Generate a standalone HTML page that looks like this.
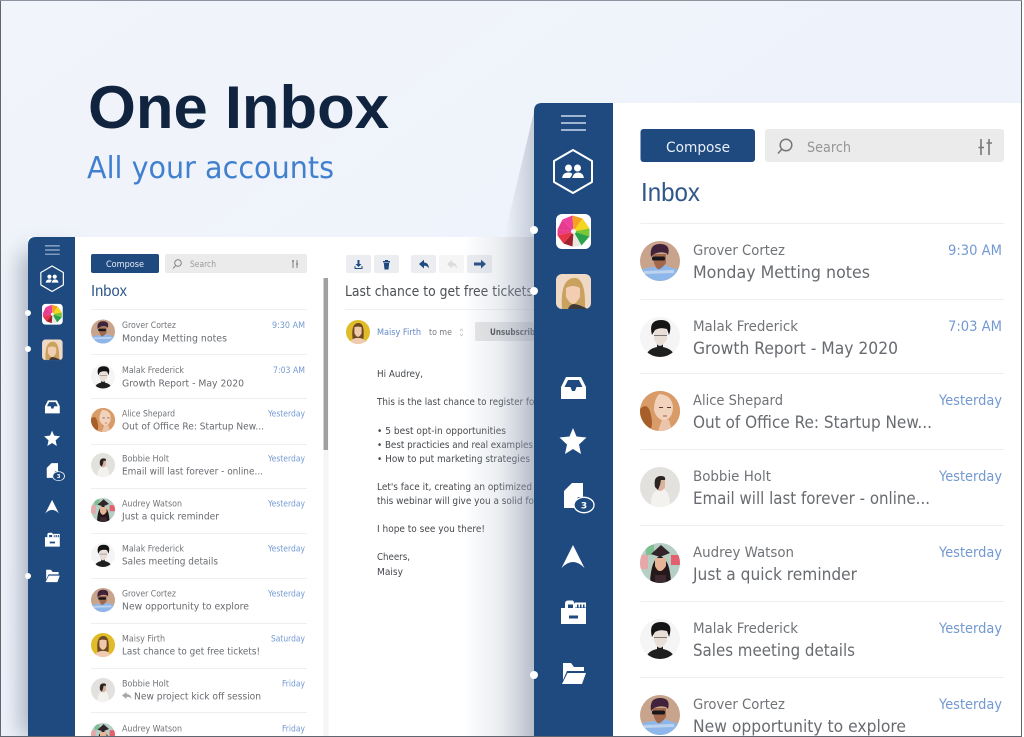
<!DOCTYPE html>
<html lang="en">
<head>
<meta charset="utf-8">
<title>One Inbox</title>
<style>
html,body{margin:0;padding:0;width:1024px;height:737px;overflow:hidden;background:#f0f4fb}
svg{display:block;filter:blur(.35px)}
text{font-family:"DejaVu Sans","Liberation Sans",sans-serif}
.n{fill:#707377}
.s{fill:#686b70}
.t{fill:#7399d2;text-anchor:end}
.b{fill:#45484d;font-size:9.6px}
.h{font-family:"Liberation Sans",sans-serif}
</style>
</head>
<body>
<svg xmlns="http://www.w3.org/2000/svg" width="1024" height="737" viewBox="0 0 1024 737">
<defs>
<linearGradient id="bg" x1="0" y1="0" x2="1" y2="1">
<stop offset="0" stop-color="#f1f4fa"/><stop offset=".5" stop-color="#eef3fb"/><stop offset="1" stop-color="#e9eff9"/>
</linearGradient>
<linearGradient id="sh" x1="0" x2="1" y1="0" y2="0">
<stop offset="0" stop-color="#9aa5b8" stop-opacity="0"/><stop offset=".5" stop-color="#9aa5b8" stop-opacity=".2"/><stop offset="1" stop-color="#8591a6" stop-opacity=".6"/>
</linearGradient>
<linearGradient id="shb" gradientUnits="userSpaceOnUse" x1="504" x2="534" y1="0" y2="0">
<stop offset="0" stop-color="#8591a6" stop-opacity="0"/><stop offset="1" stop-color="#8591a6" stop-opacity=".4"/>
</linearGradient>
<filter id="soft" filterUnits="userSpaceOnUse" x="0" y="180" width="140" height="557"><feGaussianBlur stdDeviation="12"/></filter>
<clipPath id="cc"><circle cx="0" cy="0" r="20"/></clipPath>
<clipPath id="t2"><rect x="22" y="274" width="35" height="35" rx="6"/></clipPath>
<clipPath id="pane"><rect x="329" y="237" width="205" height="500"/></clipPath>

<symbol id="grover" viewBox="-20 -20 40 40"><g clip-path="url(#cc)">
<rect x="-20" y="-20" width="40" height="40" fill="#c9a48d"/>
<path d="M-20 20V9Q-12 6 -4 6L4 4Q12 7 20 9V20Z" fill="#8db6ea"/><path d="M-16 10L14 9V12L-16 13Z" fill="#bdd3ee"/>
<path d="M-7 -7L6 -7V2Q3 6 0 8T-6 2Z" fill="#a2694c"/>
<path d="M-9 -4Q-11 -17 0 -17T8 -6L6 -8Q0 -10 -6 -7Z" fill="#40233a"/>
<rect x="-8" y="-4.500" width="13" height="4" rx="1.500" fill="#17171d"/>
</g></symbol>

<symbol id="malak" viewBox="-20 -20 40 40"><g clip-path="url(#cc)">
<rect x="-20" y="-20" width="40" height="40" fill="#f5f5f5"/>
<path d="M-14 20Q-13 12 -3 10V6H3V10Q13 12 15 20Z" fill="#1f1f1f"/>
<path d="M-6 -8H7V2Q3 9 0 9T-6 2Z" fill="#e9dfd8"/>
<path d="M-8 -2Q-12 -17 1 -17T9 -2L7 -8Q0 -10 -5 -7Z" fill="#141414"/>
<path d="M-6 -1.500H7" stroke="#555" stroke-width=".7"/>
</g></symbol>

<symbol id="alice" viewBox="-20 -20 40 40"><g clip-path="url(#cc)">
<rect x="-20" y="-20" width="40" height="40" fill="#cf8c56"/>
<path d="M-20 20V-8Q-12 -20 4 -20H20V20Z" fill="#d99c68"/>
<path d="M-20 -2Q-12 -10 -9 4T-12 20H-20Z" fill="#a85e28"/>
<path d="M-1 -17Q12 -16 13 -4Q13 6 5 10Q-4 8 -6 -1Q-6 -11 -1 -17Z" fill="#f1d2bd"/>
<path d="M-2 20L2 9L9 9L12 20Z" fill="#ecc4aa"/>
<path d="M-1 -3.500H3M7 -3.500H11" stroke="#5a3a30" stroke-width="1"/>
<path d="M3 5H7" stroke="#c16b62" stroke-width="1.200"/>
</g></symbol>

<symbol id="bobbie" viewBox="-20 -20 40 40"><g clip-path="url(#cc)">
<rect x="-20" y="-20" width="40" height="40" fill="#e3e1de"/>
<path d="M-9 20Q-10 4 0 2T10 20Z" fill="#f4f2ef"/>
<path d="M-3 -8H5V0Q3 4 0 4T-3 0Z" fill="#d8b49d"/>
<path d="M-5 0Q-7 -11 1 -11Q6 -11 5 -7H1L0 -2L-2 3Z" fill="#2b2422"/>
</g></symbol>

<symbol id="audrey" viewBox="-20 -20 40 40"><g clip-path="url(#cc)">
<rect x="-20" y="-20" width="40" height="40" fill="#b6cfc5"/>
<rect x="-20" y="-8" width="8" height="14" fill="#e7a6a8"/><rect x="11" y="-8" width="9" height="10" fill="#e45f6d"/><rect x="-14" y="-18" width="8" height="10" fill="#7fbf92"/>
<path d="M-10 20Q-9 -4 0 -7Q10 -4 11 20Z" fill="#25181a"/>
<path d="M-5 -5H6V3Q3 8 0 8T-5 3Z" fill="#e6b597"/>
<path d="M-9 -9L1 -18L10 -10L0 -6Z" fill="#33232b"/>
<path d="M-5 12H6V20H-5Z" fill="#3d2a30"/>
</g></symbol>

<symbol id="maisy" viewBox="-20 -20 40 40"><g clip-path="url(#cc)">
<rect x="-20" y="-20" width="40" height="40" fill="#e0bc2a"/>
<path d="M-9 12Q-12 -14 0 -15T9 12Z" fill="#6e4a22"/>
<path d="M-6 -8Q0 -10 6 -8V2Q3 8 0 8T-6 2Z" fill="#f0c9ab"/>
<path d="M-14 20Q-12 11 -3 10H3Q12 11 14 20Z" fill="#f0cbb2"/>
</g></symbol>

<symbol id="side" viewBox="0 0 80 737" overflow="visible">
<g fill="#ffffff">
<path d="M27 116H52M27 123H52M27 130H52" stroke="#9fb5d2" stroke-width="2" fill="none"/>
<path d="M39 150L58 161V182L39 193L20 182V161Z" fill="none" stroke="#fff" stroke-width="2" stroke-linejoin="round"/>
<circle cx="34.500" cy="168" r="3.500"/><circle cx="43.500" cy="168" r="3.500"/>
<path d="M28 178Q29 172.500 34 172.500T38 175L36 178ZM38 178L40 174Q42 172.500 44 172.500Q49 172.500 50 178Z"/>
<path fill-rule="evenodd" d="M32 377H47L52 387V399H27V387ZM34 380L30.500 387H36.500L38 391H41L42.500 387H48.500L45 380Z"/>
<path d="M39 428L42.500 436.500L52.500 437.500L45 444.500L47 454L39 449L31 454L33 444.500L25.500 437.500L35.500 436.500Z"/>
<path d="M38 483H49V497H44L41 503V508H30V491Z"/>
<ellipse cx="50" cy="505" rx="10" ry="7.700" fill="#1e4a80" stroke="#fff" stroke-width="1.300"/>
<path d="M39 545L50.500 568Q39 556 27.500 568Z"/>
<path fill-rule="evenodd" d="M27 608H52V624H27ZM35 615.500V618.500H44V615.500Z"/>
<path d="M31 608V604Q31 600.500 34 600.500H39L41 604V608H39V604.500H34V608Z"/>
<path d="M41 602.500H52V607.500H50.500V604.500H49V607.500H47.500V604.500H46V607.500H44.500V604.500H43V607.500H41Z"/>
<path d="M29 663H37L40 667H50V671H33L29 680ZM33.500 673H52L48 684H28Z"/>
</g>
<text x="50" y="508.500" font-size="9" font-weight="700" fill="#fff" text-anchor="middle">3</text>
<rect x="22" y="214" width="35" height="35" rx="6" fill="#fff"/>
<g transform="translate(39.500 231.500)">
<circle r="15.500" fill="#f2f2f2"/>
<path d="M0 0L-16 -2L-11 -12Z" fill="#e63c8f"/>
<path d="M0 0L-11 -12L-1 -16Z" fill="#ef3f9c"/>
<path d="M0 0L-1 -16L9 -13Z" fill="#f5a21e"/>
<path d="M0 0L9 -13L16 -3Z" fill="#f4d61f"/>
<path d="M0 0L16 -3L16 5Z" fill="#7bc634"/>
<path d="M0 0L16 5L8 14Z" fill="#29a24b"/>
<path d="M0 0L8 14L-1 15Z" fill="#e8e8e0"/>
<path d="M0 0L-1 15L-10 12Z" fill="#a0222d"/>
<path d="M0 0L-10 12L-16 4Z" fill="#e8344a"/>
<path d="M0 0L-16 4L-16 -2Z" fill="#ec3b86"/>
<circle r="2.500" fill="#f6f4ea"/>
</g>
<g clip-path="url(#t2)">
<rect x="22" y="274" width="35" height="35" fill="#f0d9c4"/>
<path d="M28 309Q26 280 39 278T51 309Z" fill="#c9a25f"/>
<path d="M32 288Q39 284 46 288V297Q42 304 39 304T32 297Z" fill="#f3cdb2"/>
<path d="M34 309Q36 304 40 304T54 309Z" fill="#3f3a3a"/>
</g>
</symbol>
</defs>

<rect width="1024" height="737" fill="url(#bg)"/>
<rect x="22" y="252" width="50" height="485" fill="#8f99ab" opacity=".8" filter="url(#soft)"/>

<text class="h" x="88" y="128" font-size="60" font-weight="700" fill="#10233f" textLength="301" lengthAdjust="spacingAndGlyphs">One Inbox</text>
<text x="87" y="178" font-size="30" fill="#4080cf" textLength="247" lengthAdjust="spacingAndGlyphs">All your accounts</text>

<!-- LEFT WINDOW -->
<rect x="28" y="237" width="506" height="500" fill="#fff"/>
<path d="M75 237H36Q28 237 28 245V737H75Z" fill="#1e4a80"/>
<g fill="#fff">
<circle cx="28" cy="313" r="3"/><circle cx="28" cy="349" r="3"/><circle cx="28" cy="576" r="3"/>
</g>
<use href="#side" x="29" y="177.200" width="47.360" height="436.300"/>

<rect x="91" y="254" width="68" height="19" rx="2" fill="#1e4a80"/>
<text x="125" y="267" font-size="8.500" fill="#e8eef6" text-anchor="middle" textLength="38" lengthAdjust="spacingAndGlyphs">Compose</text>
<rect x="165" y="254" width="142" height="19" rx="2" fill="#ebebeb"/>
<circle cx="178" cy="263" r="3.300" fill="none" stroke="#777" stroke-width=".9"/><path d="M175.500 265.800L173 268.500" stroke="#777" stroke-width=".9"/>
<text x="190" y="267" font-size="8.500" fill="#9b9b9b" textLength="26" lengthAdjust="spacingAndGlyphs">Search</text>
<path d="M293 260V268M292 261H294M297 260V268M296 264H298" stroke="#777" stroke-width=".9" fill="none"/>
<text class="h" x="91" y="296" font-size="15.500" fill="#2f5789" textLength="36" lengthAdjust="spacingAndGlyphs">Inbox</text>

<g stroke="#eeeeee" stroke-width="1">
<path d="M91 309.500H307M91 354.500H307M91 398.500H307M91 444.500H307M91 488.500H307M91 533.500H307M91 578.500H307M91 623.500H307M91 668.500H307M91 712.500H307"/>
</g>
<use href="#grover" x="91" y="319.500" width="24" height="24"/>
<use href="#malak" x="91" y="364.500" width="24" height="24"/>
<use href="#alice" x="91" y="408" width="24" height="24"/>
<use href="#bobbie" x="91" y="453" width="24" height="24"/>
<use href="#audrey" x="91" y="498" width="24" height="24"/>
<use href="#malak" x="91" y="543" width="24" height="24"/>
<use href="#grover" x="91" y="588" width="24" height="24"/>
<use href="#maisy" x="91" y="633" width="24" height="24"/>
<use href="#bobbie" x="91" y="678" width="24" height="24"/>
<svg x="91" y="723" width="24" height="14" viewBox="0 0 24 14"><use href="#audrey" x="0" y="0" width="24" height="24"/></svg>

<g font-size="8.600">
<text class="n" x="122" y="328" textLength="54" lengthAdjust="spacingAndGlyphs">Grover Cortez</text>
<text class="n" x="122" y="373" textLength="62" lengthAdjust="spacingAndGlyphs">Malak Frederick</text>
<text class="n" x="122" y="416.500" textLength="53" lengthAdjust="spacingAndGlyphs">Alice Shepard</text>
<text class="n" x="122" y="461.500" textLength="47" lengthAdjust="spacingAndGlyphs">Bobbie Holt</text>
<text class="n" x="122" y="506.500" textLength="60" lengthAdjust="spacingAndGlyphs">Audrey Watson</text>
<text class="n" x="122" y="551.500" textLength="62" lengthAdjust="spacingAndGlyphs">Malak Frederick</text>
<text class="n" x="122" y="596.500" textLength="54" lengthAdjust="spacingAndGlyphs">Grover Cortez</text>
<text class="n" x="122" y="641.500" textLength="43" lengthAdjust="spacingAndGlyphs">Maisy Firth</text>
<text class="n" x="122" y="686.500" textLength="47" lengthAdjust="spacingAndGlyphs">Bobbie Holt</text>
<text class="n" x="122" y="731.500" textLength="60" lengthAdjust="spacingAndGlyphs">Audrey Watson</text>
<text class="t" x="305" y="328" textLength="33" lengthAdjust="spacingAndGlyphs">9:30 AM</text>
<text class="t" x="305" y="373" textLength="32" lengthAdjust="spacingAndGlyphs">7:03 AM</text>
<text class="t" x="305" y="416.500" textLength="37" lengthAdjust="spacingAndGlyphs">Yesterday</text>
<text class="t" x="305" y="461.500" textLength="37" lengthAdjust="spacingAndGlyphs">Yesterday</text>
<text class="t" x="305" y="506.500" textLength="37" lengthAdjust="spacingAndGlyphs">Yesterday</text>
<text class="t" x="305" y="551.500" textLength="37" lengthAdjust="spacingAndGlyphs">Yesterday</text>
<text class="t" x="305" y="596.500" textLength="37" lengthAdjust="spacingAndGlyphs">Yesterday</text>
<text class="t" x="305" y="641.500" textLength="34" lengthAdjust="spacingAndGlyphs">Saturday</text>
<text class="t" x="305" y="686.500" textLength="23" lengthAdjust="spacingAndGlyphs">Friday</text>
<text class="t" x="305" y="731.500" textLength="23" lengthAdjust="spacingAndGlyphs">Friday</text>
</g>
<g font-size="10">
<text class="s" x="122" y="341.500" textLength="105" lengthAdjust="spacingAndGlyphs">Monday Metting notes</text>
<text class="s" x="122" y="386.500" textLength="122" lengthAdjust="spacingAndGlyphs">Growth Report - May 2020</text>
<text class="s" x="122" y="429.500" textLength="142" lengthAdjust="spacingAndGlyphs">Out of Office Re: Startup New...</text>
<text class="s" x="122" y="474.500" textLength="141" lengthAdjust="spacingAndGlyphs">Email will last forever - online...</text>
<text class="s" x="122" y="519.500" textLength="97" lengthAdjust="spacingAndGlyphs">Just a quick reminder</text>
<text class="s" x="122" y="564.500" textLength="96" lengthAdjust="spacingAndGlyphs">Sales meeting details</text>
<text class="s" x="122" y="609.500" textLength="127" lengthAdjust="spacingAndGlyphs">New opportunity to explore</text>
<text class="s" x="122" y="654.500" textLength="138" lengthAdjust="spacingAndGlyphs">Last chance to get free tickets!</text>
<text class="s" x="134" y="699.500" textLength="127" lengthAdjust="spacingAndGlyphs">New project kick off session</text>
</g>
<path d="M122 695.500L126.500 692V694Q131 694 131.500 699Q130 696.500 126.500 697V699Z" fill="#a6a6a6"/>

<rect x="323.500" y="278" width="5" height="459" fill="#f5f5f5"/>
<rect x="323.500" y="278" width="4.500" height="172" fill="#a0a0a0"/>

<!-- reading pane -->
<g fill="#ebedf0">
<rect x="346" y="255" width="25" height="18" rx="2"/><rect x="374" y="255" width="25" height="18" rx="2"/>
<rect x="411" y="255" width="25" height="18" rx="2"/><rect x="467" y="255" width="25" height="18" rx="2"/>
</g>
<rect x="439" y="255" width="25" height="18" rx="2" fill="#f5f5f5"/>
<g fill="#1e4a80">
<path d="M357.500 260H359.500V264H361.500L358.500 267L355.500 264H357.500ZM354.500 266V269H362.500V266H361.500V268H355.500V266Z"/>
<path d="M383 261H385V260H388V261H390V262.500H383ZM383.800 263H389.200L388.500 269.500H384.500Z"/>
<path d="M419 264L424 259.800V262.500Q428.500 262.500 429 268.500Q427 265.500 424 265.800V268.500Z"/>
<path d="M474 262.500H481V259.800L486 264L481 268.500V265.500H474Z"/>
</g>
<path d="M447 264L452 259.800V262.500Q456.500 262.500 457 268.500Q455 265.500 452 265.800V268.500Z" fill="#dcdcdc"/>
<text x="345" y="296" font-size="14.500" fill="#4c4f54" textLength="188" lengthAdjust="spacingAndGlyphs">Last chance to get free tickets</text>
<path d="M345 309.500H534" stroke="#f0f0f0"/>
<use href="#maisy" x="346" y="320" width="24" height="24"/>
<text x="377" y="335" font-size="8.600" fill="#6289c6" textLength="44" lengthAdjust="spacingAndGlyphs">Maisy Firth</text>
<text x="429" y="335" font-size="8.600" fill="#76797e" textLength="23" lengthAdjust="spacingAndGlyphs">to me</text>
<path d="M460 331L461.500 329L463 331M460 334L461.500 336L463 334" fill="none" stroke="#c4c4c4" stroke-width=".8"/>
<rect x="475" y="322" width="59" height="19" rx="2" fill="#e6e6e6"/>
<g clip-path="url(#pane)">
<text x="490" y="335" font-size="8.600" font-weight="700" fill="#4c4f54" textLength="50" lengthAdjust="spacingAndGlyphs">Unsubscribe</text>
<text class="b" x="377" y="377" textLength="46" lengthAdjust="spacingAndGlyphs">Hi Audrey,</text>
<text class="b" x="377" y="405" textLength="161" lengthAdjust="spacingAndGlyphs">This is the last chance to register for</text>
<text class="b" x="377" y="434" textLength="129" lengthAdjust="spacingAndGlyphs">• 5 best opt-in opportunities</text>
<text class="b" x="377" y="448" textLength="156" lengthAdjust="spacingAndGlyphs">• Best practicies and real examples</text>
<text class="b" x="377" y="462" textLength="153" lengthAdjust="spacingAndGlyphs">• How to put marketing strategies</text>
<text class="b" x="377" y="490" textLength="155" lengthAdjust="spacingAndGlyphs">Let's face it, creating an optimized</text>
<text class="b" x="377" y="504" textLength="157" lengthAdjust="spacingAndGlyphs">this webinar will give you a solid fo</text>
<text class="b" x="377" y="532" textLength="108" lengthAdjust="spacingAndGlyphs">I hope to see you there!</text>
<text class="b" x="377" y="560" textLength="33" lengthAdjust="spacingAndGlyphs">Cheers,</text>
<text class="b" x="377" y="575" textLength="26" lengthAdjust="spacingAndGlyphs">Maisy</text>
</g>
<!-- right window shadow falling on left window and background -->
<rect x="464" y="237" width="70" height="500" fill="url(#sh)"/>
<path d="M534 112L504 237H534Z" fill="url(#shb)"/>

<!-- RIGHT WINDOW -->
<rect x="606" y="103" width="416" height="634" fill="#fff"/>
<path d="M613 103H542Q534 103 534 111V737H613Z" fill="#1e4a80"/>
<g fill="#fff">
<circle cx="534" cy="230" r="4"/><circle cx="534" cy="291" r="4"/><circle cx="534" cy="675" r="4"/>
</g>
<use href="#side" x="534" y="0" width="80" height="737"/>

<rect x="640.500" y="129" width="114.500" height="33" rx="3" fill="#1e4a80"/>
<text x="698" y="152" font-size="14.500" fill="#eaf0f8" text-anchor="middle" textLength="64" lengthAdjust="spacingAndGlyphs">Compose</text>
<rect x="765" y="129" width="239" height="33" rx="3" fill="#ebebeb"/>
<circle cx="786" cy="145" r="5.800" fill="none" stroke="#777" stroke-width="1.500"/><path d="M781.500 149.500L778 153.500" stroke="#777" stroke-width="1.500"/>
<text x="807" y="152" font-size="14" fill="#969696" textLength="44" lengthAdjust="spacingAndGlyphs">Search</text>
<path d="M981 139V155M978.500 147.500H984M989 139V155M986.500 143H992" stroke="#777" stroke-width="1.600" fill="none"/>
<text class="h" x="641" y="201" font-size="26" fill="#2f5789" textLength="59" lengthAdjust="spacingAndGlyphs">Inbox</text>

<path d="M640.500 223.500H1004M640.500 299.500H1004M640.500 373.500H1004M640.500 449.500H1004M640.500 525.500H1004M640.500 601.500H1004M640.500 677.500H1004" stroke="#eeeeee"/>

<use href="#grover" x="640" y="241" width="40" height="40"/>
<use href="#malak" x="640" y="317" width="40" height="40"/>
<use href="#alice" x="640" y="391" width="40" height="40"/>
<use href="#bobbie" x="640" y="467" width="40" height="40"/>
<use href="#audrey" x="640" y="543" width="40" height="40"/>
<use href="#malak" x="640" y="619" width="40" height="40"/>
<use href="#grover" x="640" y="695" width="40" height="40"/>

<g font-size="14.200">
<text class="n" x="693" y="255" textLength="92" lengthAdjust="spacingAndGlyphs">Grover Cortez</text>
<text class="n" x="693" y="331" textLength="105" lengthAdjust="spacingAndGlyphs">Malak Frederick</text>
<text class="n" x="693" y="405" textLength="90" lengthAdjust="spacingAndGlyphs">Alice Shepard</text>
<text class="n" x="693" y="481" textLength="78" lengthAdjust="spacingAndGlyphs">Bobbie Holt</text>
<text class="n" x="693" y="557" textLength="101" lengthAdjust="spacingAndGlyphs">Audrey Watson</text>
<text class="n" x="693" y="633" textLength="105" lengthAdjust="spacingAndGlyphs">Malak Frederick</text>
<text class="n" x="693" y="709" textLength="92" lengthAdjust="spacingAndGlyphs">Grover Cortez</text>
<text class="t" x="1002" y="255" textLength="54" lengthAdjust="spacingAndGlyphs">9:30 AM</text>
<text class="t" x="1002" y="331" textLength="54" lengthAdjust="spacingAndGlyphs">7:03 AM</text>
<text class="t" x="1002" y="405" textLength="63" lengthAdjust="spacingAndGlyphs">Yesterday</text>
<text class="t" x="1002" y="481" textLength="63" lengthAdjust="spacingAndGlyphs">Yesterday</text>
<text class="t" x="1002" y="557" textLength="63" lengthAdjust="spacingAndGlyphs">Yesterday</text>
<text class="t" x="1002" y="633" textLength="63" lengthAdjust="spacingAndGlyphs">Yesterday</text>
<text class="t" x="1002" y="709" textLength="63" lengthAdjust="spacingAndGlyphs">Yesterday</text>
</g>
<g font-size="16.600">
<text class="s" x="693" y="278" textLength="177" lengthAdjust="spacingAndGlyphs">Monday Metting notes</text>
<text class="s" x="693" y="354" textLength="205" lengthAdjust="spacingAndGlyphs">Growth Report - May 2020</text>
<text class="s" x="693" y="428" textLength="239" lengthAdjust="spacingAndGlyphs">Out of Office Re: Startup New...</text>
<text class="s" x="693" y="504" textLength="237" lengthAdjust="spacingAndGlyphs">Email will last forever - online...</text>
<text class="s" x="693" y="580" textLength="164" lengthAdjust="spacingAndGlyphs">Just a quick reminder</text>
<text class="s" x="693" y="656" textLength="162" lengthAdjust="spacingAndGlyphs">Sales meeting details</text>
<text class="s" x="693" y="732" textLength="213" lengthAdjust="spacingAndGlyphs">New opportunity to explore</text>
</g>

<!-- frame -->
<rect x="1021" y="0" width="1" height="737" fill="#5f6670"/>
<rect x="1022" y="0" width="2" height="737" fill="#fff"/>
<rect x="0" y="0" width="1" height="737" fill="#5f6670"/>
<rect x="0" y="0" width="1022" height="1" fill="#8d94a0"/>
<rect x="0" y="736" width="1022" height="1" fill="#5f6670"/>
</svg>
</body>
</html>
